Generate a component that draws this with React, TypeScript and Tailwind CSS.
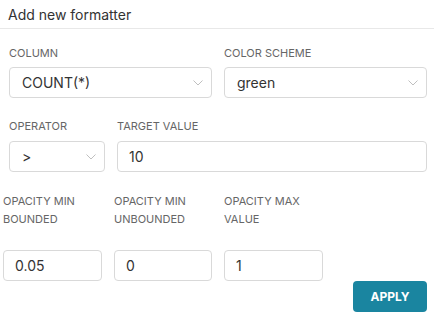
import React from "react";

const Chevron = () => (
  <svg width="10" height="6" viewBox="0 0 10 6" fill="none" className="shrink-0">
    <path d="M0.5 0.5 L5 5 L9.5 0.5" stroke="#bfbfbf" strokeWidth="1" />
  </svg>
);

const Label = ({ children }: { children: React.ReactNode }) => (
  <div className="text-[11px] leading-[16px] text-[#666666] uppercase">{children}</div>
);

const Select = ({ value, className }: { value: string; className: string }) => (
  <div
    className={`h-[31px] border border-[#d9d9d9] rounded-[4px] bg-white flex items-center justify-between pl-[12px] pr-[8px] text-[14px] text-[#333333] ${className}`}
  >
    <span>{value}</span>
    <Chevron />
  </div>
);

const Input = ({ value, className }: { value: string; className: string }) => (
  <div
    className={`h-[31px] border border-[#d9d9d9] rounded-[4px] bg-white flex items-center px-[11px] text-[14px] text-[#333333] ${className}`}
  >
    {value}
  </div>
);

export default function App() {
  return (
    <div
      className="w-[434px] h-[327px] bg-white overflow-hidden"
      style={{ fontFamily: "Inter, 'Liberation Sans', sans-serif" }}
    >
      <div className="h-[29px] border-b border-[#e8e8e8] pl-[8px] flex items-center text-[14px] text-[#333333]">
        Add new formatter
      </div>
      <div className="flex gap-[12px] pl-[9px] mt-[16px]">
        <div className="flex flex-col gap-[6px]">
          <Label>Column</Label>
          <Select value="COUNT(*)" className="w-[203px]" />
        </div>
        <div className="flex flex-col gap-[6px]">
          <Label>Color scheme</Label>
          <Select value="green" className="w-[203px]" />
        </div>
      </div>
      <div className="flex gap-[12px] pl-[9px] mt-[20px]">
        <div className="flex flex-col gap-[7px]">
          <Label>Operator</Label>
          <Select value=">" className="w-[96px]" />
        </div>
        <div className="flex flex-col gap-[7px]">
          <Label>Target value</Label>
          <Input value="10" className="w-[310px]" />
        </div>
      </div>
      <div className="flex pl-[3px] mt-[20px]">
        <div className="flex flex-col w-[111px]">
          <div className="text-[11px] leading-[18px] text-[#666666] h-[58px]">
            OPACITY MIN
            <br />
            BOUNDED
          </div>
          <Input value="0.05" className="w-[99px]" />
        </div>
        <div className="flex flex-col w-[110px]">
          <div className="text-[11px] leading-[18px] text-[#666666] h-[58px]">
            OPACITY MIN
            <br />
            UNBOUNDED
          </div>
          <Input value="0" className="w-[98px]" />
        </div>
        <div className="flex flex-col w-[99px]">
          <div className="text-[11px] leading-[18px] text-[#666666] h-[58px]">
            OPACITY MAX
            <br />
            VALUE
          </div>
          <Input value="1" className="w-[99px]" />
        </div>
      </div>
      <div className="flex justify-end pr-[7px]">
        <button className="w-[74px] h-[31px] rounded-[4px] bg-[#1a85a0] text-white text-[12px] font-bold">
          APPLY
        </button>
      </div>
    </div>
  );
}
